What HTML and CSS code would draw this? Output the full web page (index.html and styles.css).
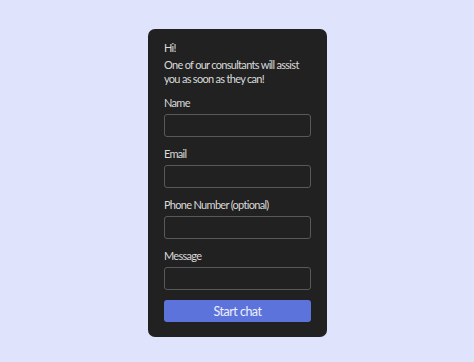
FILE: index.html
```html
<!DOCTYPE html>
<html>
<head>
<meta charset="utf-8">
<link rel="stylesheet" href="styles.css">
</head>
<body>
<div class="page">
  <form class="card">
    <p class="hi">Hi!</p>
    <p class="intro">One of our consultants will assist you as soon as they can!</p>
    <div class="field">
      <label class="label">Name</label>
      <input class="input" type="text">
    </div>
    <div class="field">
      <label class="label">Email</label>
      <input class="input" type="text">
    </div>
    <div class="field">
      <label class="label">Phone Number (optional)</label>
      <input class="input" type="text">
    </div>
    <div class="field">
      <label class="label">Message</label>
      <input class="input" type="text">
    </div>
    <button class="btn" type="button">Start chat</button>
  </form>
</div>
</body>
</html>
```

FILE: styles.css
```css
html, body {
  margin: 0;
  padding: 0;
}
body {
  background: #dfe3fc;
  font-family: Lato, "Noto Sans", sans-serif;
  width: 474px;
  height: 362px;
  overflow: hidden;
}
.page {
  display: flex;
  justify-content: center;
  padding-top: 29px;
  padding-left: 1px;
}
.card {
  width: 179px;
  box-sizing: border-box;
  background: #212121;
  border-radius: 7px;
  padding: 12px 16px 15px;
  display: flex;
  flex-direction: column;
  color: #dadada;
  font-size: 11px;
  letter-spacing: -0.7px;
  line-height: 14px;
}
.hi {
  margin: 0 0 3px;
}
.intro {
  margin: 0 0 10px;
}
.field {
  display: flex;
  flex-direction: column;
  margin-bottom: 10px;
}
.label {
  margin-bottom: 4px;
}
.input {
  height: 23px;
  box-sizing: border-box;
  background: #212121;
  border: 1px solid #595959;
  border-radius: 3px;
  margin: 0;
  padding: 0 6px;
}
.btn {
  height: 22px;
  border: none;
  border-radius: 3px;
  background: #5d73dc;
  color: #eef0ff;
  font-family: Lato, "Noto Sans", sans-serif;
  font-size: 12.5px;
  letter-spacing: -0.5px;
  padding: 0;
}
```
